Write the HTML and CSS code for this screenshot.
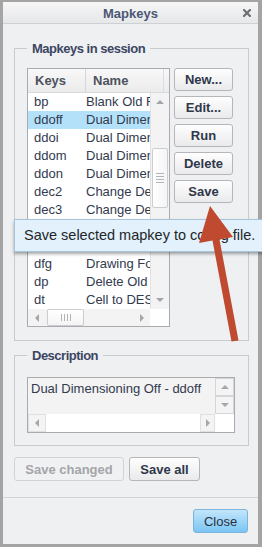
FILE: index.html
```html
<!DOCTYPE html>
<html>
<head>
<meta charset="utf-8">
<link rel="stylesheet" href="styles.css">
</head>
<body>
<div class="window">
  <div class="titlebar">
    <span></span>
    <span class="title">Mapkeys</span>
    <span class="close-x"><svg width="8" height="8" viewBox="0 0 8 8"><path d="M1 1 L7 7 M7 1 L1 7" stroke="#6e6f73" stroke-width="2.2" stroke-linecap="square"/></svg></span>
  </div>
  <div class="main">
    <fieldset class="group g-session">
      <legend>Mapkeys in session</legend>
      <div class="session-body">
        <div class="listbox">
          <div class="lb-head">
            <div class="hc hc-keys">Keys</div>
            <div class="hc hc-name">Name</div>
            <div class="hc hc-end"></div>
          </div>
          <div class="lb-body">
            <div class="rows">
              <div class="row"><span class="k">bp</span><span class="n">Blank Old Format</span></div>
              <div class="row sel"><span class="k">ddoff</span><span class="n">Dual Dimensioning Off</span></div>
              <div class="row"><span class="k">ddoi</span><span class="n">Dual Dimensioning Inch</span></div>
              <div class="row"><span class="k">ddom</span><span class="n">Dual Dimensioning Metric</span></div>
              <div class="row"><span class="k">ddon</span><span class="n">Dual Dimensioning On</span></div>
              <div class="row"><span class="k">dec2</span><span class="n">Change Decimals 2</span></div>
              <div class="row"><span class="k">dec3</span><span class="n">Change Decimals 3</span></div>
              <div class="row"><span class="k">dec4</span><span class="n">Change Decimals 4</span></div>
              <div class="row"><span class="k">del</span><span class="n">Delete Notes</span></div>
              <div class="row"><span class="k">dfg</span><span class="n">Drawing Format</span></div>
              <div class="row"><span class="k">dp</span><span class="n">Delete Old Parameters</span></div>
              <div class="row"><span class="k">dt</span><span class="n">Cell to DESIGN</span></div>
            </div>
            <div class="vscroll">
              <div class="vs-btn"><span class="tri tri-up"></span></div>
              <div class="vs-track"><div class="vthumb"><span class="vgrip"></span></div></div>
              <div class="vs-btn"><span class="tri tri-down"></span></div>
            </div>
          </div>
          <div class="lb-foot">
            <div class="hscroll">
              <div class="hs-btn hs-left"><span class="tri tri-left"></span></div>
              <div class="hs-track"><div class="hthumb"><span class="hgrip"></span></div></div>
              <div class="hs-btn hs-right"><span class="tri tri-right"></span></div>
            </div>
            <div class="corner"></div>
          </div>
        </div>
        <div class="btn-col">
          <button class="btn side">New...</button>
          <button class="btn side">Edit...</button>
          <button class="btn side">Run</button>
          <button class="btn side">Delete</button>
          <button class="btn side">Save</button>
        </div>
      </div>
    </fieldset>
    <fieldset class="group g-desc">
      <legend>Description</legend>
      <div class="desc">
        <div class="desc-text">Dual Dimensioning Off - ddoff</div>
        <div class="desc-vs">
          <div class="dv-btn"><span class="tri tri-up"></span></div>
          <div class="dv-btn"><span class="tri tri-down"></span></div>
        </div>
        <div class="desc-hs">
          <div class="dh-btn dh-left"><span class="tri tri-left"></span></div>
          <div class="dh-track"></div>
          <div class="dh-btn dh-right"><span class="tri tri-right"></span></div>
        </div>
        <div class="corner"></div>
      </div>
    </fieldset>
    <div class="save-row">
      <button class="btn wide disabled">Save changed</button>
      <button class="btn saveall">Save all</button>
    </div>
  </div>
  <div class="footer">
    <button class="btn primary">Close</button>
  </div>
</div>
<div class="tooltip">Save selected mapkey to config file.</div>
<svg class="arrow" width="262" height="547" viewBox="0 0 262 547">
  <polygon points="210,206 233,237 219.5,239.4 238.5,340.5 231.5,341.5 212.5,240.6 199,243" fill="#bf4a30"/>
</svg>
</body>
</html>
```

FILE: styles.css
```css
* { box-sizing: border-box; }
html, body { margin: 0; padding: 0; }
body {
  position: relative;
  width: 262px;
  height: 547px;
  overflow: hidden;
  background: #a4a4a4;
  font-family: "Liberation Sans", Arial, sans-serif;
}
.window {
  width: 262px;
  height: 547px;
  border-style: solid;
  border-color: #a4a4a4;
  border-width: 2px 4px 3px 3px;
  background: #eff0f2;
  display: flex;
  flex-direction: column;
}
.titlebar {
  height: 22px;
  flex: none;
  border-bottom: 1px solid #cfd0d3;
  background: linear-gradient(#f6f6f7, #e6e7e9);
  display: grid;
  grid-template-columns: 1fr auto 1fr;
  align-items: center;
  padding-top: 1px;
}
.title {
  font-weight: bold;
  font-size: 13px;
  color: #4b5675;
}
.close-x {
  justify-self: end;
  padding-right: 7px;
  display: flex;
}
.main {
  padding: 17px 9px 0 11px;
  display: flex;
  flex-direction: column;
}
.group {
  margin: 0;
  border: 1px solid #c9cacd;
  min-width: 0;
}
.group legend {
  padding: 0 5px;
  margin: 0;
  font-weight: bold;
  font-size: 13px;
  line-height: 15px;
  color: #3b4662;
  letter-spacing: -0.5px;
}
.g-session { padding: 12px 15px 13px 12px; }
.g-desc { padding: 14px 13px 12px 12px; margin-top: 7px; }
.session-body {
  display: flex;
  gap: 4px;
  align-items: flex-start;
}
.listbox {
  width: 143px;
  height: 259px;
  border: 1px solid #a9abaf;
  background: #fff;
  display: flex;
  flex-direction: column;
}
.lb-head {
  height: 24px;
  flex: none;
  display: flex;
  border-bottom: 1px solid #d9d9db;
  background: linear-gradient(#f8f8f8, #ebebec);
}
.hc {
  font-weight: bold;
  font-size: 13px;
  line-height: 23px;
  color: #4d525c;
  padding-left: 7px;
}
.hc-keys { width: 58px; border-right: 1px solid #d6d6d8; }
.hc-name { width: 78px; border-right: 1px solid #dcdcde; }
.hc-end { flex: 1; padding: 0; }
.lb-body {
  height: 216px;
  flex: none;
  display: flex;
}
.rows {
  flex: 1;
  overflow: hidden;
}
.row {
  height: 18px;
  display: flex;
  white-space: nowrap;
  font-size: 13px;
  line-height: 18px;
  color: #323a4e;
}
.row.sel { background: #b4e1fa; }
.k { width: 58px; flex: none; padding-left: 6px; }
.n { flex: none; }
.vscroll {
  width: 19px;
  flex: none;
  border-left: 1px solid #e1e1e3;
  background: #f3f3f4;
  display: flex;
  flex-direction: column;
}
.vs-btn {
  height: 18px;
  flex: none;
  display: flex;
  align-items: center;
  justify-content: center;
}
.vs-track { flex: 1; }
.vthumb {
  margin: 37px 0 0 1px;
  width: 16px;
  height: 60px;
  border: 1px solid #cdcdd0;
  border-radius: 2px;
  background: linear-gradient(90deg, #ffffff, #f4f4f5);
  display: flex;
  align-items: center;
  justify-content: center;
}
.vgrip {
  width: 8px;
  height: 10px;
  background: repeating-linear-gradient(#b3b3b6 0 1px, transparent 1px 3px);
}
.lb-foot {
  height: 17px;
  flex: none;
  display: flex;
}
.hscroll {
  flex: 1;
  display: flex;
  background: #f3f3f4;
}
.hs-btn {
  display: flex;
  align-items: center;
  justify-content: center;
  flex: none;
}
.hs-left { width: 18px; }
.hs-right { width: 16px; }
.hs-track { flex: 1; display: flex; align-items: stretch; }
.hthumb {
  margin: 0 0 0 1px;
  width: 37px;
  border: 1px solid #cdcdd0;
  border-radius: 2px;
  background: linear-gradient(#ffffff, #f4f4f5);
  display: flex;
  align-items: center;
  justify-content: center;
}
.hgrip {
  width: 10px;
  height: 7px;
  background: repeating-linear-gradient(90deg, #b3b3b6 0 1px, transparent 1px 3px);
}
.corner { width: 19px; flex: none; background: #fff; }
.tri { width: 0; height: 0; display: block; }
.tri-up { border-left: 4px solid transparent; border-right: 4px solid transparent; border-bottom: 4px solid #a6a6a9; }
.tri-down { border-left: 4px solid transparent; border-right: 4px solid transparent; border-top: 4px solid #a6a6a9; }
.tri-left { border-top: 4px solid transparent; border-bottom: 4px solid transparent; border-right: 4px solid #a6a6a9; }
.tri-right { border-top: 4px solid transparent; border-bottom: 4px solid transparent; border-left: 4px solid #a6a6a9; }
.btn-col {
  display: flex;
  flex-direction: column;
  gap: 5px;
}
.btn {
  border: 1px solid #b5b6b9;
  border-radius: 3px;
  background: linear-gradient(#fefefe, #eaeaec);
  font-family: "Liberation Sans", Arial, sans-serif;
  font-weight: bold;
  font-size: 13px;
  color: #2f374a;
  padding: 0;
  margin: 0;
}
.btn.side { width: 59px; height: 23px; }
.desc {
  width: 208px;
  height: 56px;
  border: 1px solid #a9abaf;
  background: #fff;
  display: grid;
  grid-template-columns: 1fr 19px;
  grid-template-rows: 36px 18px;
}
.desc-text {
  background: #f3f3f4;
  font-size: 13px;
  line-height: 18px;
  color: #323a4e;
  padding: 2px 0 0 3px;
  white-space: nowrap;
  overflow: hidden;
}
.desc-vs {
  display: flex;
  flex-direction: column;
  background: #fff;
}
.dv-btn {
  height: 18px;
  border: 1px solid #d6d6d9;
  background: #f4f4f5;
  display: flex;
  align-items: center;
  justify-content: center;
}
.desc-hs { display: flex; background: #fff; }
.dh-btn {
  flex: none;
  background: #f4f4f5;
  border: 1px solid #e0e0e2;
  display: flex;
  align-items: center;
  justify-content: center;
}
.dh-left { width: 18px; }
.dh-right { width: 15px; }
.dh-track { flex: 1; background: #fff; }
.save-row {
  display: flex;
  gap: 5px;
  margin-top: 11px;
}
.save-row .btn { height: 24px; }
.btn.wide { width: 110px; }
.btn.saveall { width: 71px; }
.btn.disabled {
  color: #a4a5a8;
  background: #f0f1f2;
  border-color: #d2d3d6;
}
.footer {
  margin-top: auto;
  border-top: 1px solid #d3d4d7;
  padding: 11px 10px 11px 0;
  display: flex;
  justify-content: flex-end;
}
.btn.primary {
  width: 55px;
  height: 24px;
  border-color: #7fb4da;
  background: linear-gradient(#c2e6fc, #7ac5f2);
  font-weight: normal;
  color: #29303f;
}
.tooltip {
  position: absolute;
  left: 14px;
  top: 219px;
  width: 260px;
  height: 33px;
  background: #e2f1fb;
  border: 1px solid #a6c5db;
  box-shadow: 0 2px 3px rgba(0, 0, 0, 0.35);
  font-size: 14.5px;
  line-height: 31px;
  padding-left: 9px;
  color: #222629;
  white-space: nowrap;
}
.arrow {
  position: absolute;
  left: 0;
  top: 0;
  pointer-events: none;
}
```
